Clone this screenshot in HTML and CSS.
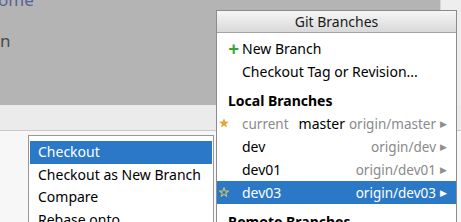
FILE: index.html
```html
<!DOCTYPE html>
<html>
<head>
	<title>Git Branches</title>
	<meta charset="utf-8">
	<link rel="stylesheet" href="styles.css">
</head>
<body>

	<div class="screen">
		<div class="top">
			<div class="editor">
				<p class="link">ome</p>
				<p class="word">n</p>
			</div>
			<div class="side"></div>
		</div>
		<div class="toolbar"></div>
		<div class="bottom"></div>
	</div>

	<!-- context menu of a branch -->
	<div class="menu">
		<div class="item sel">Checkout</div>
		<div class="item">Checkout as New Branch</div>
		<div class="item">Compare</div>
		<div class="item">Rebase onto</div>
	</div>

	<!-- branches popup -->
	<div class="popup">
		<div class="title">Git Branches</div>
		<div class="list">
			<div class="row"><span class="icon plus">+</span><span class="name">New Branch</span></div>
			<div class="row"><span class="icon"></span><span class="name">Checkout Tag or Revision...</span></div>

			<div class="group">Local Branches</div>
			<div class="row">
				<span class="icon">
					<svg class="star" width="10" height="10" viewBox="0 0 10 10"><polygon points="5,0.3 6.3,3.6 9.8,3.8 7.1,6 8,9.6 5,7.6 2,9.6 2.9,6 0.2,3.8 3.7,3.6" fill="#eba236"/></svg>
				</span>
				<span class="muted">current</span>
				<span class="name">master</span>
				<span class="remote">origin/master</span>
				<span class="arrow">▶</span>
			</div>
			<div class="row">
				<span class="icon"></span>
				<span class="name">dev</span>
				<span class="remote">origin/dev</span>
				<span class="arrow">▶</span>
			</div>
			<div class="row">
				<span class="icon"></span>
				<span class="name">dev01</span>
				<span class="remote">origin/dev01</span>
				<span class="arrow">▶</span>
			</div>
			<div class="row sel">
				<span class="icon">
					<svg class="star" width="10" height="10" viewBox="0 0 10 10"><polygon points="5,0.8 6.1,3.9 9.3,4 6.8,6 7.6,9.2 5,7.4 2.4,9.2 3.2,6 0.7,4 3.9,3.9" fill="none" stroke="#cdbf6a" stroke-width="1.1"/></svg>
				</span>
				<span class="name">dev03</span>
				<span class="remote">origin/dev03</span>
				<span class="arrow">▶</span>
			</div>
			<div class="group">Remote Branches</div>
		</div>
	</div>

</body>
</html>
```

FILE: styles.css
```css
* {
	box-sizing: border-box;
	font-family: "Noto Sans", "Liberation Sans", sans-serif;
}

body {
	margin: 0;
	width: 461px;
	height: 222px;
	overflow: hidden;
	position: relative;
	font-size: 13px;
}

.screen {
	display: flex;
	flex-direction: column;
	height: 222px;
}

.top {
	display: flex;
	height: 105px;
}

.editor {
	width: 440px;
	background-color: #b4b4b4;
	overflow: hidden;
}

.side {
	flex: 1;
	background-color: #eeeeee;
	border-left: 1px solid #d6d6d6;
}

.editor p {
	margin: 0;
	font-size: 17px;
}

.link {
	color: #56639a;
	margin-top: -11px !important;
	margin-left: -2px !important;
	line-height: 22px;
}

.word {
	color: #4a4a4a;
	margin-top: 19px !important;
	line-height: 22px;
}

.toolbar {
	height: 26px;
	background-color: #ebebeb;
	border-bottom: 1px solid #c9c9c9;
}

.bottom {
	flex: 1;
	background-color: #f7f7f7;
}

/* context menu */

.menu {
	position: absolute;
	left: 28px;
	top: 135px;
	width: 186px;
	height: 87px;
	overflow: hidden;
	background-color: #fff;
	border: 1px solid #979797;
	border-bottom: none;
	padding: 5px 1px 0 1px;
}

.menu .item {
	height: 22.5px;
	line-height: 22px;
	padding-left: 8px;
	font-size: 14px;
	color: #000;
	white-space: nowrap;
}

.menu .item.sel {
	background-color: #2a78c6;
	color: #fff;
}

/* git branches popup */

.popup {
	position: absolute;
	left: 216px;
	top: 10px;
	width: 241px;
	height: 212px;
	overflow: hidden;
	background-color: #fff;
	border: 1px solid #8c8c8c;
	border-bottom: none;
}

.title {
	height: 22px;
	line-height: 21px;
	text-align: center;
	font-size: 14px;
	color: #1a1a1a;
	background: linear-gradient(#f6f6f6, #d9d9d9);
	border-bottom: 1px solid #a3a3a3;
}

.list {
	padding-top: 4px;
}

.row {
	display: flex;
	align-items: center;
	height: 23px;
	padding-right: 9px;
	font-size: 14px;
	color: #000;
	white-space: nowrap;
}

.icon {
	width: 25px;
	flex: none;
	display: flex;
	align-items: center;
	font-size: 11px;
}

.star {
	display: block;
	margin-left: 2px;
	margin-top: -1px;
}

.plus {
	justify-content: flex-end;
	font-size: 19px;
	font-weight: 700;
	color: #3aa335;
	padding-right: 3px;
	line-height: 20px;
}

.muted {
	font-size: 13.5px;
	color: #8a8a8a;
	margin-right: 10px;
}

.remote {
	margin-left: auto;
	font-size: 13.5px;
	color: #8a8a8a;
}

.arrow {
	font-size: 9px;
	color: #8f8f8f;
	margin-left: 4px;
}

.group {
	height: 23px;
	line-height: 23px;
	margin-top: 6px;
	padding-left: 11px;
	font-size: 14px;
	font-weight: 700;
	color: #000;
}

.row.sel {
	background-color: #2a78c6;
	color: #fff;
}

.row.sel .remote,
.row.sel .arrow {
	color: #fff;
}
```
